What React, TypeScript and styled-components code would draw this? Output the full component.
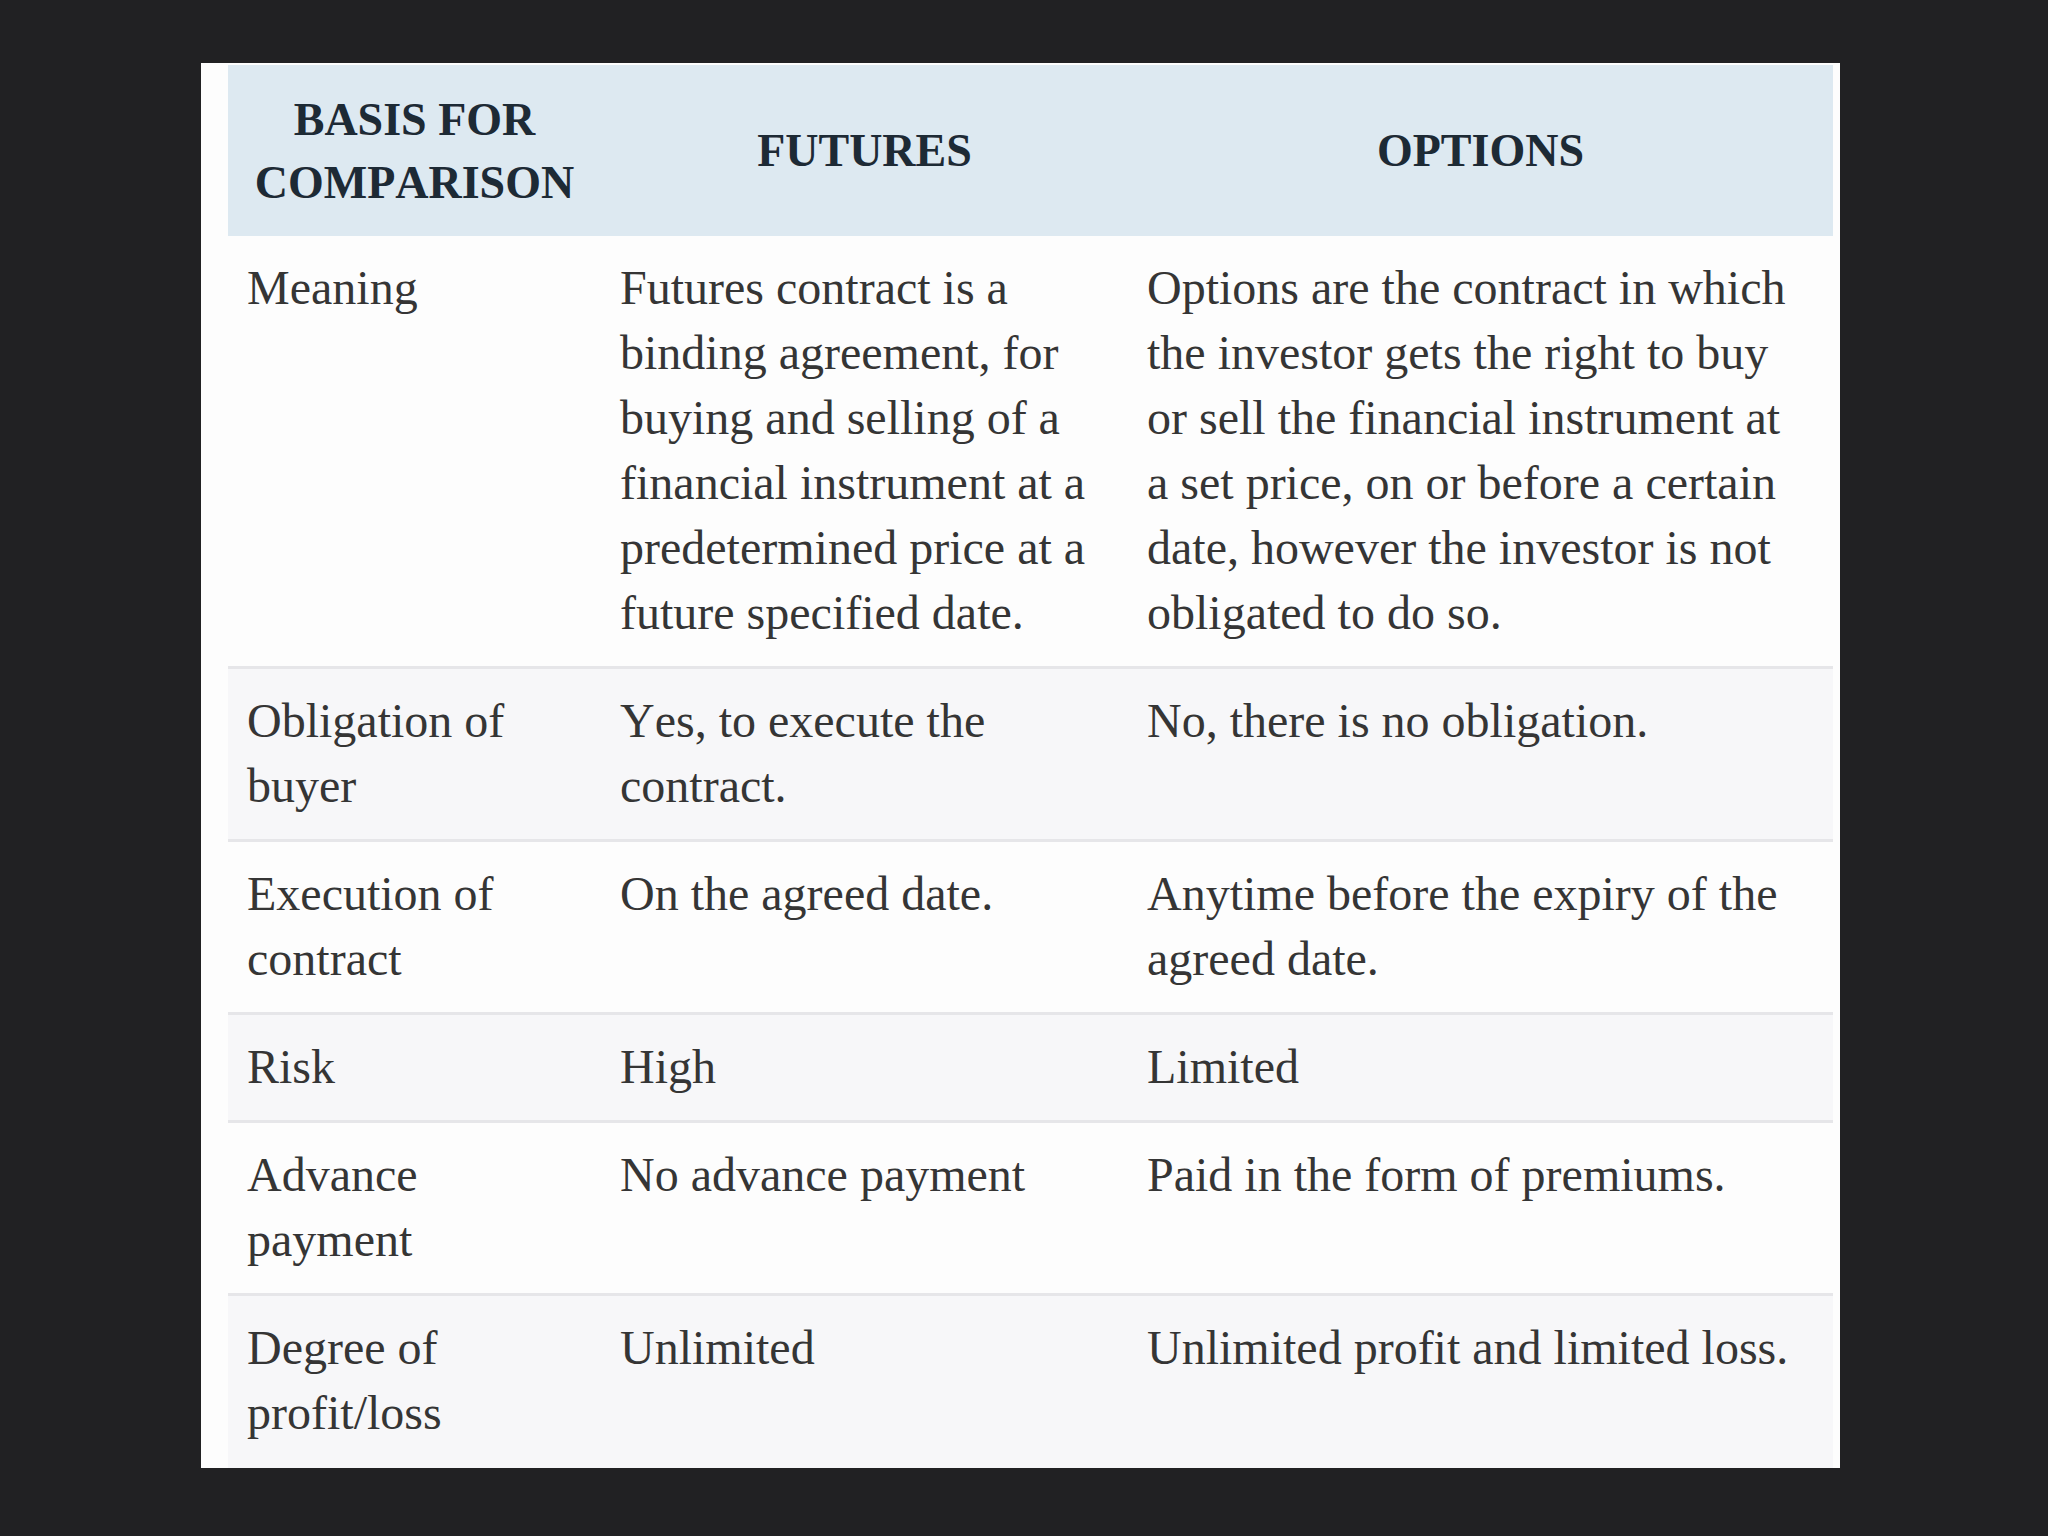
import styled, { createGlobalStyle } from "styled-components";

const GlobalStyle = createGlobalStyle`
  html, body {
    margin: 0;
    padding: 0;
    background: #212123;
  }
`;

interface RowData {
  basis: string;
  futures: string;
  options: string;
}

const rows: RowData[] = [
  {
    basis: "Meaning",
    futures:
      "Futures contract is a binding agreement, for buying and selling of a financial instrument at a predetermined price at a future specified date.",
    options:
      "Options are the contract in which the investor gets the right to buy or sell the financial instrument at a set price, on or before a certain date, however the investor is not obligated to do so.",
  },
  { basis: "Obligation of buyer", futures: "Yes, to execute the contract.", options: "No, there is no obligation." },
  { basis: "Execution of contract", futures: "On the agreed date.", options: "Anytime before the expiry of the agreed date." },
  { basis: "Risk", futures: "High", options: "Limited" },
  { basis: "Advance payment", futures: "No advance payment", options: "Paid in the form of premiums." },
  { basis: "Degree of profit/loss", futures: "Unlimited", options: "Unlimited profit and limited loss." },
];

const App = () => {
  return (
    <>
      <GlobalStyle />
      <Page>
        <Panel>
          <Table>
            <colgroup>
              <col style={{ width: 373 }} />
              <col style={{ width: 527 }} />
              <col style={{ width: 705 }} />
            </colgroup>
            <thead>
              <tr>
                <HeadCell>BASIS FOR COMPARISON</HeadCell>
                <HeadCell>FUTURES</HeadCell>
                <HeadCell>OPTIONS</HeadCell>
              </tr>
            </thead>
            <tbody>
              {rows.map((row, i) => (
                <Row key={row.basis} $shaded={i % 2 === 1}>
                  <Cell>{row.basis}</Cell>
                  <Cell>{row.futures}</Cell>
                  <Cell $wide>{row.options}</Cell>
                </Row>
              ))}
            </tbody>
          </Table>
        </Panel>
      </Page>
    </>
  );
};

export default App;

const Page = styled.div`
  width: 2048px;
  height: 1536px;
  box-sizing: border-box;
  padding: 63px 0 0 201px;
`;

const Panel = styled.div`
  width: 1639px;
  height: 1405px;
  box-sizing: border-box;
  background: #fdfdfd;
  padding: 2px 9px 0 27px;
  overflow: hidden;
`;

const Table = styled.table`
  width: 1603px;
  table-layout: fixed;
  border-collapse: collapse;
  font-family: "Liberation Serif", "Times New Roman", serif;
  font-kerning: none;
`;

const HeadCell = styled.th`
  height: 171px;
  padding: 0 19px;
  background: #dde9f1;
  color: #1d2a35;
  font-size: 46px;
  font-weight: 700;
  line-height: 63px;
  text-align: center;
  vertical-align: middle;
`;

const Row = styled.tr<{ $shaded: boolean }>`
  background: ${({ $shaded }) => ($shaded ? "#f7f7f9" : "#fdfdfd")};
  border-bottom: 3px solid #e6e6e9;

  &:last-child {
    border-bottom: none;
  }

  &:last-child td {
    padding-bottom: 40px;
  }
`;

const Cell = styled.td<{ $wide?: boolean }>`
  padding: 19px ${({ $wide }) => ($wide ? "36px" : "19px")} 21px 19px;
  color: #353535;
  font-size: 48px;
  line-height: 65px;
  vertical-align: top;
`;
